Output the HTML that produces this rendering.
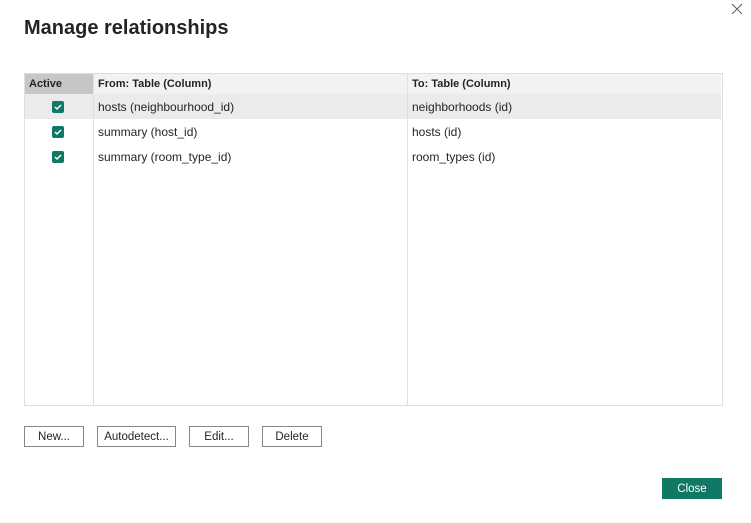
<html><head><style>
body{margin:0;width:751px;height:523px;background:#fff;font-family:"Segoe UI","Liberation Sans",sans-serif;position:relative;overflow:hidden;color:#252423}
.a{position:absolute}
.t{font-size:12px}
.btn{position:absolute;top:426px;height:21px;border:1px solid #8a8886;box-sizing:border-box;font-size:11.5px;text-align:center;line-height:20px;background:#fff}
.cb{position:absolute;left:52px;width:12px;height:12px;background:#117865;border-radius:2px}
</style></head><body>
<div class="a" style="left:24px;top:17px;font-size:20px;font-weight:600;color:#252423">Manage relationships</div>
<svg class="a" style="left:731px;top:3px" width="12" height="12"><path d="M1 1L11 11M11 1L1 11" stroke="#605e5c" stroke-width="1"/></svg>
<div class="a" style="left:24px;top:73px;width:697px;height:331px;border:1px solid #e1dfdd"></div>
<div class="a" style="left:25px;top:74px;width:68px;height:20px;background:#c8c6c4"></div>
<div class="a" style="left:94px;top:74px;width:627px;height:20px;background:#f3f2f1"></div>
<div class="a" style="left:25px;top:94px;width:696px;height:25px;background:#ebebeb"></div>
<div class="a" style="left:93px;top:74px;width:1px;height:331px;background:#e1dfdd"></div>
<div class="a" style="left:407px;top:74px;width:1px;height:331px;background:#e1dfdd"></div>
<div class="a t" style="left:29px;top:78px;font-weight:600;font-size:11px">Active</div>
<div class="a t" style="left:98px;top:78px;font-weight:600;font-size:11px">From: Table (Column)</div>
<div class="a t" style="left:412px;top:78px;font-weight:600;font-size:11px">To: Table (Column)</div>
<div class="cb" style="top:101px"></div><div class="cb" style="top:126px"></div><div class="cb" style="top:151px"></div>
<svg class="a" style="left:52px;top:101px" width="12" height="62"><g fill="none" stroke="#fff" stroke-width="1.5"><path d="M3 6l2 2 4-4"/><path d="M3 31l2 2 4-4"/><path d="M3 56l2 2 4-4"/></g></svg>
<div class="a t" style="left:98px;top:100px">hosts (neighbourhood_id)</div>
<div class="a t" style="left:412px;top:100px">neighborhoods (id)</div>
<div class="a t" style="left:98px;top:125px">summary (host_id)</div>
<div class="a t" style="left:412px;top:125px">hosts (id)</div>
<div class="a t" style="left:98px;top:150px">summary (room_type_id)</div>
<div class="a t" style="left:412px;top:150px">room_types (id)</div>
<div class="btn" style="left:24px;width:60px">New...</div>
<div class="btn" style="left:97px;width:79px">Autodetect...</div>
<div class="btn" style="left:189px;width:60px">Edit...</div>
<div class="btn" style="left:262px;width:60px">Delete</div>
<div class="a" style="left:662px;top:478px;width:60px;height:21px;background:#117865;color:#fff;font-size:11.5px;text-align:center;line-height:23px">Close</div>
</body></html>
